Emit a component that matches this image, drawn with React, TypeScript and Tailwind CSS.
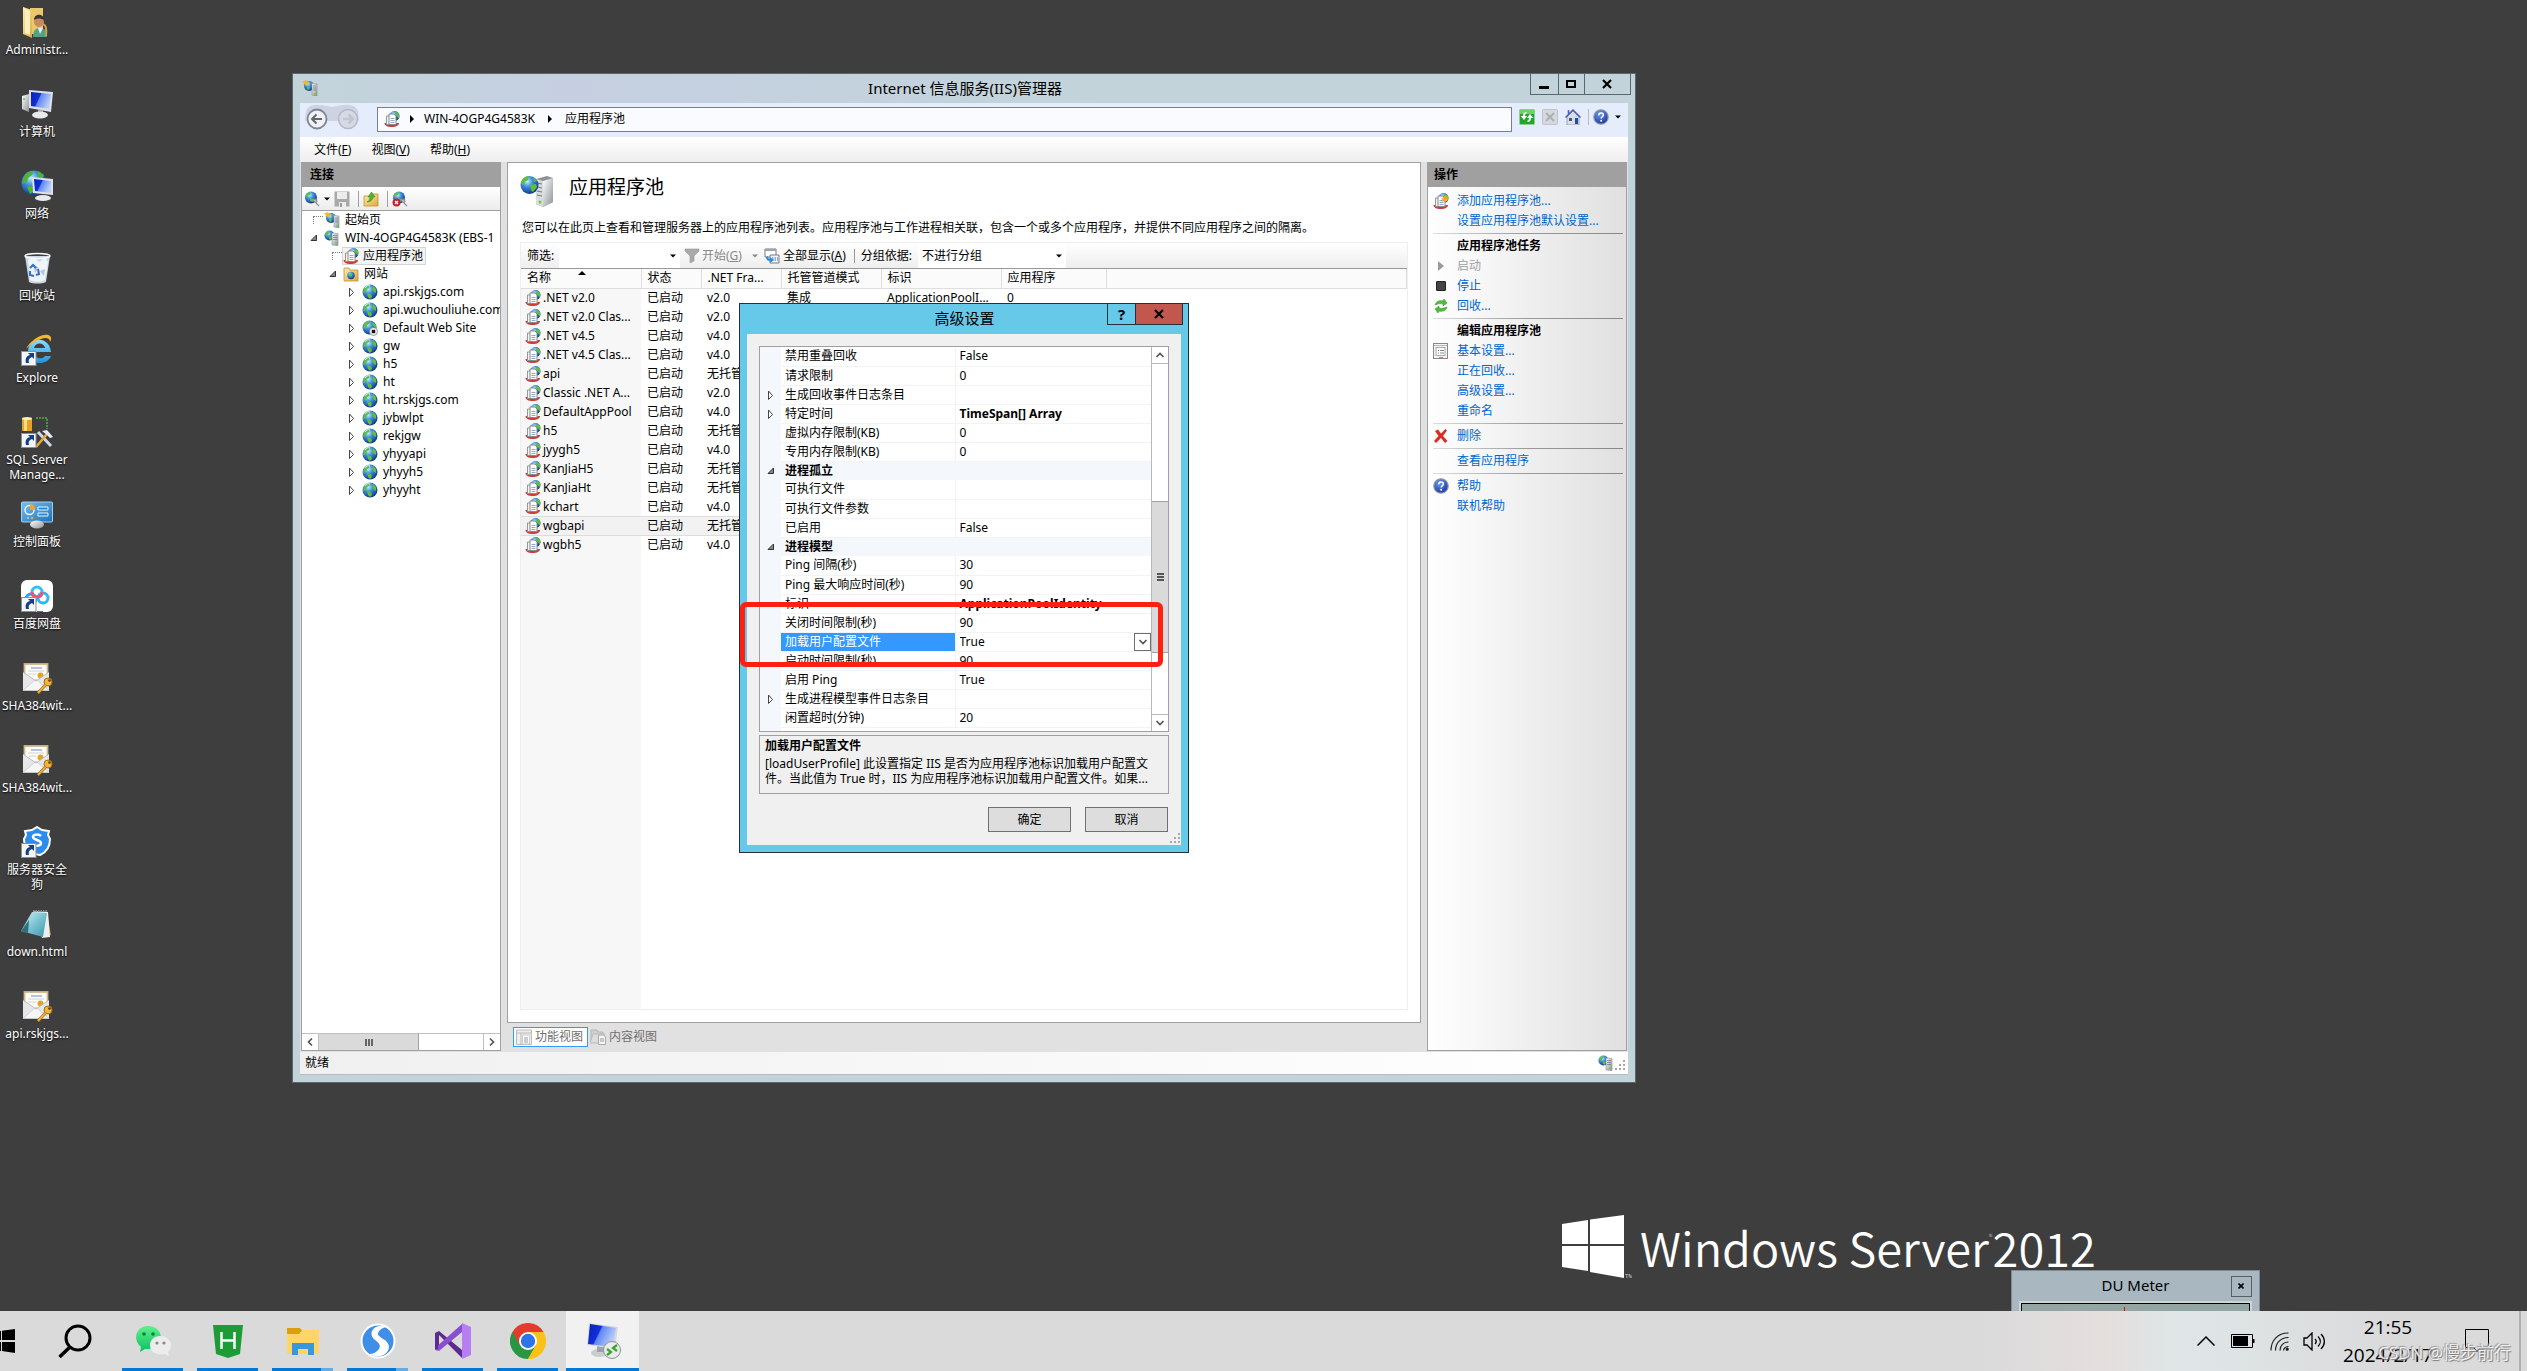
import type { ReactNode } from "react";

type IconProps = { className?: string };

function Defs() {
  return (
    <svg className="absolute h-0 w-0" aria-hidden="true">
      <defs>
        <radialGradient id="globe" cx="0.38" cy="0.3" r="0.75">
          <stop offset="0" stopColor="#c4ecff" />
          <stop offset="0.4" stopColor="#3f8fe0" />
          <stop offset="1" stopColor="#0b2f86" />
        </radialGradient>
        <linearGradient id="screen" x1="0" y1="0" x2="1" y2="0.4">
          <stop offset="0" stopColor="#0a1fb8" />
          <stop offset="0.45" stopColor="#1230d8" />
          <stop offset="0.5" stopColor="#5f86f4" />
          <stop offset="1" stopColor="#b9cdfb" />
        </linearGradient>
        <linearGradient id="steel" x1="0" y1="0" x2="1" y2="1">
          <stop offset="0" stopColor="#ffffff" />
          <stop offset="1" stopColor="#8d9297" />
        </linearGradient>
        <linearGradient id="gold" x1="0" y1="0" x2="1" y2="1">
          <stop offset="0" stopColor="#ffeeb0" />
          <stop offset="1" stopColor="#dfa93c" />
        </linearGradient>
        <linearGradient id="sky" x1="0" y1="0" x2="0" y2="1">
          <stop offset="0" stopColor="#8fdcfa" />
          <stop offset="1" stopColor="#1d94dc" />
        </linearGradient>
        <linearGradient id="panel" x1="0" y1="0" x2="1" y2="1">
          <stop offset="0" stopColor="#77c0ee" />
          <stop offset="1" stopColor="#1e71ba" />
        </linearGradient>
        <radialGradient id="helpBlue" cx="0.4" cy="0.3" r="0.8">
          <stop offset="0" stopColor="#6e9cf0" />
          <stop offset="1" stopColor="#0f2a8c" />
        </radialGradient>
        <linearGradient id="note" x1="0" y1="0" x2="1" y2="1">
          <stop offset="0" stopColor="#d8f4f7" />
          <stop offset="0.5" stopColor="#7cc4d2" />
          <stop offset="1" stopColor="#3f94a8" />
        </linearGradient>
        <linearGradient id="chat" x1="0" y1="0" x2="0" y2="1">
          <stop offset="0" stopColor="#5df08a" />
          <stop offset="1" stopColor="#0cc160" />
        </linearGradient>
      </defs>
    </svg>
  );
}

function Shortcut() {
  return (
    <g>
      <rect x="0.5" y="17.5" width="14.5" height="14" fill="#f4f6f8" stroke="#8a8f94" />
      <path d="M5 29c-1-4 0-7 4-8l-2-2h6v6l-2-2c-3 1-4 3-3 6z" fill="#123f8c" />
    </g>
  );
}

function UserFolderIcon() {
  return (
    <svg viewBox="0 0 32 32" className="h-8 w-8">
      <path d="M9 2h13v26H9z" fill="#e9c96c" />
      <path d="M2 1l9 3v28l-9-4z" fill="url(#gold)" />
      <path d="M4 3l5 2v24l-5-2z" fill="#fff1be" />
      <path d="M12 31c0-7 3-9 7-9s7 2 7 9z" fill="#55a088" />
      <path d="M17 22l2 6 3-6z" fill="#e7ede6" />
      <circle cx="18" cy="16" r="5" fill="#c58b62" />
      <path d="M13 14c0-7 10-7 10 0-3-2-7-2-10 0z" fill="#3f332d" />
      <path d="M22 18c3 1 4 5 3 12" stroke="#d2a046" strokeWidth="2" fill="none" />
    </svg>
  );
}

function ComputerIcon() {
  return (
    <svg viewBox="0 0 32 32" className="h-8 w-8">
      <path d="M1 8l7-2v18l-7-3z" fill="url(#steel)" />
      <circle cx="3" cy="11" r="1" fill="#58d33a" />
      <path d="M8 2l24 2-2 20-22-4z" fill="#dfe2e4" />
      <path d="M10 4l20 2-2 15-18-3z" fill="url(#screen)" />
      <path d="M17 21l5 1v4h-5z" fill="#a9adb0" />
      <ellipse cx="19" cy="27" rx="8" ry="3.5" fill="#e8eaeb" />
    </svg>
  );
}

function NetworkIcon() {
  return (
    <svg viewBox="0 0 32 32" className="h-8 w-8">
      <circle cx="13" cy="13" r="12.5" fill="url(#globe)" />
      <path d="M3 7c3-5 7-6 10-6l-2 4-4 3-1 4-5 2zM6 17l5-2 1 7-3 2zM17 1l6 4-2 4-4-3z" fill="#4fb52f" />
      <path d="M11 7l21 2v16l-20-2z" fill="#dfe2e4" />
      <path d="M13 9l17 2v12l-16-2z" fill="url(#screen)" />
      <ellipse cx="22" cy="28" rx="8" ry="3" fill="#e8eaeb" />
    </svg>
  );
}

function RecycleBinIcon() {
  return (
    <svg viewBox="0 0 32 32" className="h-8 w-8">
      <path d="M4 4h25l-4 26c-4 2-13 2-17 0z" fill="#c9d8e4" />
      <path d="M7 8l6-3 5 5 6-4 3 4-3 18c-4 2-11 2-15 0z" fill="#eef4f8" />
      <path d="M12 12l6 4-4 5zM19 19l5-2-1 7z" fill="#b5c6d4" />
      <ellipse cx="16.500" cy="4" rx="12.500" ry="2.500" fill="none" stroke="#f7fafc" strokeWidth="1.500" />
      <path d="M9 16l3-3 3 3M17 17l1 5-3 1M13 24l-4-1v-4" stroke="#2f6fd0" strokeWidth="2" fill="none" />
    </svg>
  );
}

function ExplorerIcon() {
  return (
    <svg viewBox="0 0 32 32" className="h-8 w-8">
      <path
        d="M30 18H13c0 7 9 8 11 4h6c-4 11-24 9-23-5S28 1 30 18zM13 14h11c-1-6-10-6-11 0z"
        fill="url(#sky)"
      />
      <path d="M5 15C10 5 24-2 29 2c2 2 1 4 0 6 0-4-4-5-9-3-7 2-12 7-15 10z" fill="#f7b52c" />
      <Shortcut />
    </svg>
  );
}

function SqlIcon() {
  return (
    <svg viewBox="0 0 32 32" className="h-8 w-8">
      <rect x="1" y="2" width="10" height="13" fill="#e8a31c" />
      <rect x="3" y="2" width="3" height="13" fill="#ffdf85" />
      <ellipse cx="6" cy="2.500" rx="5" ry="1.500" fill="#fff0b5" />
      <path d="M15 2h11v11" stroke="#49b53a" strokeWidth="1.500" strokeDasharray="2 1" fill="none" />
      <path d="M30 30L17 16" stroke="#cfd9e6" strokeWidth="3" />
      <path d="M15 31l11-13" stroke="#e5a93c" strokeWidth="2.500" />
      <path d="M21 15l5-1 6 7-3 1-3-3z" fill="#e9eef4" />
      <Shortcut />
    </svg>
  );
}

function ControlPanelIcon() {
  return (
    <svg viewBox="0 0 32 32" className="h-8 w-8">
      <rect x="0.500" y="4" width="31" height="20" rx="1" fill="url(#panel)" stroke="#9fd0f0" />
      <circle cx="8.500" cy="12" r="4.500" fill="none" stroke="#e8f5ff" strokeWidth="1.500" />
      <path d="M9 6v6h5c0-4-2-6-5-6z" fill="#f6a428" />
      <path d="M17 9h10v3H17zM17 15h10v3H17z" fill="#2b86cc" stroke="#e8f5ff" />
      <circle cx="7" cy="20" r="1" fill="#7fe1ff" />
      <circle cx="11" cy="20" r="1.300" fill="#f6a428" />
      <ellipse cx="16" cy="26.500" rx="7" ry="4" fill="url(#steel)" />
    </svg>
  );
}

function NetdiskIcon() {
  return (
    <svg viewBox="0 0 32 32" className="h-8 w-8">
      <rect width="32" height="32" rx="6" fill="#fff" />
      <circle cx="10" cy="19" r="5" fill="none" stroke="#2a9ff4" strokeWidth="3" />
      <circle cx="22" cy="18" r="5" fill="none" stroke="#27b9f2" strokeWidth="3" />
      <circle cx="16" cy="12" r="5" fill="none" stroke="#35c0f5" strokeWidth="3" />
      <path d="M11 12c0 4 2 5 5 5s5-1 5-5" fill="none" stroke="#f5517c" strokeWidth="3" />
      <path d="M16 32h6v-1h-6z" fill="#1d7fe8" />
      <Shortcut />
    </svg>
  );
}

function CertificateIcon() {
  return (
    <svg viewBox="0 0 32 32" className="h-8 w-8">
      <rect x="3.500" y="2" width="23" height="20" fill="#fffdf6" stroke="#cdb88f" strokeWidth="1.800" />
      <path d="M10 6h11" stroke="#7f9fd4" strokeWidth="1.200" />
      <path d="M7 9h16M8 12h7" stroke="#cdd1d6" />
      <circle cx="19.500" cy="13.500" r="3" fill="#e0a526" />
      <path d="M2 10l13 9 13-9v18.500H2z" fill="#e6e7e8" />
      <path d="M2 28.500L15 17l13 11.500z" fill="#f6f6f7" stroke="#c6c9cc" strokeWidth="0.800" />
      <path d="M2 10l13 9 13-9" stroke="#a9acb0" strokeWidth="0.800" fill="none" />
      <circle cx="27" cy="20" r="4" fill="#f0b33c" stroke="#a36f12" />
      <circle cx="28.500" cy="18.500" r="1.300" fill="#5d3f0a" />
      <path d="M24.500 23L17 31" stroke="#a36f12" strokeWidth="3" />
      <path d="M24.500 23L17 31" stroke="#f0b33c" strokeWidth="1.800" />
    </svg>
  );
}

function GuardIcon() {
  return (
    <svg viewBox="0 0 32 32" className="h-8 w-8">
      <path
        d="M16 1l5 3 7 1-1 4 2 4c0 7-3 13-10 16C9 28 3 21 3 13l2-4-1-4 7-1z"
        fill="#2b8cee"
        stroke="#fff"
        strokeWidth="2"
      />
      <path d="M20 10c-2-2-8-2-8 1s8 3 8 6-6 4-9 1" stroke="#fff" strokeWidth="2.500" fill="none" />
      <Shortcut />
    </svg>
  );
}

function NotepadIcon() {
  return (
    <svg viewBox="0 0 32 32" className="h-8 w-8">
      <path d="M26 5l4 22-6 2z" fill="#b98f3a" />
      <path d="M12 3l15 1 2 25-8 1z" fill="#e9f1f2" />
      <path d="M11 4l15 1-4 24L0 23z" fill="url(#note)" />
      <path d="M0 23l8-11-1 13z" fill="#2d6f80" />
      <path d="M12 3h15" stroke="#888" strokeWidth="2" strokeDasharray="1.500 1" />
    </svg>
  );
}

function GlobeIcon({ className = "h-4 w-4" }: IconProps) {
  return (
    <svg viewBox="0 0 16 16" className={className}>
      <circle cx="8" cy="8" r="7.500" fill="url(#globe)" />
      <path d="M2 5c1-3 4-4 6-4L7 4 5 5 4 8 1 9zM5 9l4 1 1 3-2 2-2-2zM11 2l3 3v4l-2-1-2-3z" fill="#5fbf3d" />
      <path d="M3 4c1-2 3-3 5-2" stroke="#e4f6ff" strokeWidth="1" fill="none" />
    </svg>
  );
}

function StoppedGlobeIcon() {
  return (
    <svg viewBox="0 0 16 16" className="h-4 w-4">
      <circle cx="7.500" cy="7.500" r="7" fill="url(#globe)" />
      <path d="M2 5c1-3 4-4 6-4L7 4 5 5 4 8 1 9zM11 2l3 3v3l-4-3z" fill="#5fbf3d" />
      <circle cx="11.500" cy="11.500" r="4" fill="#f2f2f2" stroke="#777" strokeWidth="0.700" />
      <rect x="9.800" y="9.800" width="3.400" height="3.400" fill="#111" />
    </svg>
  );
}

function ServerIcon({ className = "h-4 w-4" }: IconProps) {
  return (
    <svg viewBox="0 0 16 16" className={className}>
      <circle cx="5.500" cy="5.500" r="5" fill="url(#globe)" />
      <path d="M1 4c1-2 3-3 5-3L5 3 3 6zM5 6l3 1-1 3-2-1z" fill="#5fbf3d" />
      <path d="M8 3l6 0.500v12L8 15z" fill="url(#steel)" stroke="#868b90" strokeWidth="0.600" />
      <path d="M9 5.500h4M9 7.500h4M9 9.500h4" stroke="#73787d" strokeWidth="0.800" />
      <rect x="11" y="12.500" width="2" height="1.500" fill="#62d820" />
    </svg>
  );
}

function StartPageIcon() {
  return (
    <svg viewBox="0 0 16 16" className="h-4 w-4">
      <circle cx="7" cy="6" r="5" fill="url(#globe)" />
      <path d="M5 6l3 1-1 3-2-1zM8 2l3 1v3z" fill="#5fbf3d" />
      <path d="M4 0l1 2 2-1-1 2 1 2-2-1-1 2-1-2-2 1 1-2-2-2h2z" fill="#f9b51f" />
      <path d="M10 3.500l5 0.500v12l-5-1z" fill="url(#steel)" stroke="#868b90" strokeWidth="0.600" />
      <path d="M11 6h3M11 8h3M11 10h3" stroke="#73787d" strokeWidth="0.800" />
      <rect x="12" y="13" width="2" height="1.500" fill="#62d820" />
    </svg>
  );
}

function BigServerIcon() {
  return (
    <svg viewBox="0 0 34 34" className="h-[34px] w-[34px] shrink-0">
      <path d="M16 5l11-3 6 2v24l-10 5-7-3z" fill="#8e9296" />
      <path d="M16 5l7 2v26l-7-3z" fill="#d9dcde" />
      <path d="M23 7l10-3v24l-10 5z" fill="url(#steel)" />
      <path d="M17 9l5 1M17 13l5 1M17 17l5 1M17 21l5 1" stroke="#777c80" strokeWidth="1.200" />
      <circle cx="20" cy="28" r="1.500" fill="#62d820" />
      <circle cx="9.500" cy="11" r="9" fill="url(#globe)" />
      <path d="M1 10c0-5 4-8 8-8l-1 4-4 2 1 3zM10 11l6-1 1 3-4 5-2-2zM13 3l4 4-3 1z" fill="#5fbf3d" />
    </svg>
  );
}

function PoolIcon({ star = false }: { star?: boolean }) {
  return (
    <svg viewBox="0 0 16 16" className="h-4 w-4 shrink-0">
      <circle cx="10.500" cy="5" r="5" fill="url(#globe)" />
      <path d="M11 0.500l4 2v5l-3-3z" fill="#5fbf3d" />
      <path d="M0.500 12h3l1 2h7l1-2h2.500c0 2.500-3 4-7.300 4S0.500 14.500 0.500 12z" fill="#c9403a" />
      <path d="M2.500 5h5v8.500h-5z" fill="#f2f2f2" stroke="#8c8c8c" strokeWidth="0.900" />
      <path d="M5 3h5l2 2v8.500H5z" fill="#fff" stroke="#7e7e7e" strokeWidth="0.900" />
      <path d="M6.500 7.500h4M6.500 9.500h4M6.500 11.500h4" stroke="#7695b5" strokeWidth="0.800" />
      {star && <path d="M12 2l1 2 2-1-1 2 2 1-2 1 1 2-2-1-1 2-1-2-2 1 1-2-2-1 2-1-1-2 2 1z" fill="#f9a91f" />}
    </svg>
  );
}

function SitesFolderIcon() {
  return (
    <svg viewBox="0 0 16 16" className="h-4 w-4">
      <path d="M1 2h5l1 2h8v11H1z" fill="url(#gold)" stroke="#bf9136" strokeWidth="0.800" />
      <circle cx="8" cy="9.500" r="3.700" fill="url(#globe)" />
      <path d="M6 8l3-1 0 3-2 1z" fill="#5fbf3d" />
    </svg>
  );
}

function ConnectIcon({ broken = false }: { broken?: boolean }) {
  return (
    <svg viewBox="0 0 16 16" className="h-4 w-4">
      <circle cx="7" cy="6.500" r="6" fill="url(#globe)" />
      <path d="M1 6c1-3 3-5 6-5L6 4 3 5zM6 7l4 1-1 3-3-1z" fill="#5fbf3d" />
      <path d="M9 9l2-1 2 2-1 2zM12 12l3 3" fill="#cfd4d8" stroke="#8a9096" strokeWidth="1.200" />
      {broken && (
        <g>
          <circle cx="4.500" cy="11.500" r="4" fill="#c9202b" />
          <path d="M3 10l3 3M6 10l-3 3" stroke="#fff" strokeWidth="1.200" />
        </g>
      )}
    </svg>
  );
}

function HelpIcon() {
  return (
    <svg viewBox="0 0 16 16" className="h-4 w-4">
      <circle cx="8" cy="8" r="7.200" fill="url(#helpBlue)" stroke="#8f96a6" strokeWidth="1.200" />
      <path d="M5.800 6.200c0-3 4.600-3 4.600-0.200 0 1.600-2.200 1.600-2.200 3.400" stroke="#fff" strokeWidth="1.500" fill="none" />
      <circle cx="8.200" cy="11.700" r="1" fill="#fff" />
    </svg>
  );
}

function Caret({ className = "fill-black" }: IconProps) {
  return (
    <svg viewBox="0 0 6 4" className={`h-1 w-1.5 shrink-0 ${className}`}>
      <path d="M0 0.500h6l-3 3z" />
    </svg>
  );
}

function Chevron({ turn = "" }: { turn?: string }) {
  return (
    <svg viewBox="0 0 10 10" className={`h-2.5 w-2.5 ${turn}`}>
      <path d="M1.500 3l3.500 3.500L8.500 3" stroke="#555" strokeWidth="1.700" fill="none" />
    </svg>
  );
}

function Expander({ open }: { open: boolean }) {
  return (
    <svg viewBox="0 0 10 10" className="h-2.5 w-2.5 shrink-0">
      {open ? <path d="M7.500 2v5.500H2z" fill="#888" stroke="#333" /> : <path d="M2.500 1l4 4.500-4 4z" fill="#fff" stroke="#444" />}
    </svg>
  );
}

function Grip() {
  return (
    <svg viewBox="0 0 12 12" className="h-3 w-3" fill="#a8a8a8">
      <path d="M9 1h2v2H9zM5 5h2v2H5zM9 5h2v2H9zM1 9h2v2H1zM5 9h2v2H5zM9 9h2v2H9z" />
    </svg>
  );
}

const shortcuts: { icon: ReactNode; label: string }[] = [
  { icon: <UserFolderIcon />, label: "Administr..." },
  { icon: <ComputerIcon />, label: "计算机" },
  { icon: <NetworkIcon />, label: "网络" },
  { icon: <RecycleBinIcon />, label: "回收站" },
  { icon: <ExplorerIcon />, label: "Explore" },
  { icon: <SqlIcon />, label: "SQL Server Manage..." },
  { icon: <ControlPanelIcon />, label: "控制面板" },
  { icon: <NetdiskIcon />, label: "百度网盘" },
  { icon: <CertificateIcon />, label: "SHA384wit..." },
  { icon: <CertificateIcon />, label: "SHA384wit..." },
  { icon: <GuardIcon />, label: "服务器安全狗" },
  { icon: <NotepadIcon />, label: "down.html" },
  { icon: <CertificateIcon />, label: "api.rskjgs..." },
];

function DesktopIcons() {
  return (
    <ul className="flex w-[74px] flex-col pt-1.5">
      {shortcuts.map((s, i) => (
        <li key={i} className="h-[82px]">
          <button className="flex w-full flex-col items-center gap-1 text-center leading-[15px] text-white [text-shadow:0_1px_2px_#000]">
            {s.icon}
            <span className="w-[70px]">{s.label}</span>
          </button>
        </li>
      ))}
    </ul>
  );
}

type TreeNode = {
  level: 0 | 1 | 2;
  label: string;
  icon: ReactNode;
  open?: boolean;
  leaf?: boolean;
  selected?: boolean;
};

const sites = [
  "api.rskjgs.com",
  "api.wuchouliuhe.com",
  "Default Web Site",
  "gw",
  "h5",
  "ht",
  "ht.rskjgs.com",
  "jybwlpt",
  "rekjgw",
  "yhyyapi",
  "yhyyh5",
  "yhyyht",
];

const tree: TreeNode[] = [
  { level: 0, label: "起始页", icon: <StartPageIcon />, leaf: true },
  { level: 0, label: "WIN-4OGP4G4583K (EBS-1", icon: <ServerIcon />, open: true },
  { level: 1, label: "应用程序池", icon: <PoolIcon />, leaf: true, selected: true },
  { level: 1, label: "网站", icon: <SitesFolderIcon />, open: true },
  ...sites.map((label): TreeNode => ({
    level: 2,
    label,
    icon: label === "Default Web Site" ? <StoppedGlobeIcon /> : <GlobeIcon />,
  })),
];

const indent = ["pl-[7px]", "pl-[26px]", "pl-[45px]"];

function Connections() {
  return (
    <section className="flex w-[200px] shrink-0 flex-col border border-[#a0a0a0] bg-white">
      <h2 className="h-6 bg-[#a0a0a0] pl-2 leading-6 font-bold">连接</h2>
      <div className="flex h-6 items-center border-b border-[#a0a0a0] bg-linear-to-b from-white to-[#ececec] pl-0.5">
        <button aria-label="连接" className="flex items-center gap-1">
          <ConnectIcon />
          <Caret />
        </button>
        <button aria-label="保存" className="ml-1">
          <svg viewBox="0 0 16 16" className="h-4 w-4">
            <path d="M0.500 0.500h15v15h-15z" fill="#a9a9a9" />
            <path d="M3 1h10v7H3zM5 11h7v5H5z" fill="#ececec" />
            <path d="M6 12h2v4H6z" fill="#999" />
          </svg>
        </button>
        <span className="mr-1 ml-2 h-4 w-px bg-[#a0a0a0]" />
        <button aria-label="上移">
          <svg viewBox="0 0 16 16" className="h-4 w-4">
            <path d="M1 5h6l1-2h7v12H1z" fill="url(#gold)" stroke="#bf9136" strokeWidth="0.800" />
            <path d="M4 11c2-1 3-2 3-5H5l3.500-5L12 6h-2c0 3-3 5-6 5z" fill="#4fb52f" stroke="#2c7a18" strokeWidth="0.500" />
          </svg>
        </button>
        <span className="mr-1 ml-2 h-4 w-px bg-[#a0a0a0]" />
        <button aria-label="断开连接">
          <ConnectIcon broken />
        </button>
      </div>
      <ul className="flex-1 overflow-hidden">
        {tree.map((n) => (
          <li key={n.label} className={`flex h-[18px] items-center whitespace-nowrap ${indent[n.level]}`}>
            <span className="flex w-3.5 shrink-0 items-center">
              {n.leaf ? <span className="ml-1 h-2 w-2.5 border-t border-l border-dotted border-[#777]" /> : <Expander open={!!n.open} />}
            </span>
            <span
              className={
                n.selected
                  ? "flex h-[18px] items-center gap-1 border border-[#d5d5d5] bg-[#f3f3f3] pr-0.5"
                  : "flex items-center gap-[5px] pl-px"
              }
            >
              <span className="h-4 w-4 shrink-0">{n.icon}</span>
              <span className="leading-[18px]">{n.label}</span>
            </span>
          </li>
        ))}
      </ul>
      <div className="flex h-[17px] border-t border-[#c0c0c0]">
        <button aria-label="向左" className="flex w-[17px] items-center justify-center border-r border-[#c0c0c0]">
          <Chevron turn="rotate-90" />
        </button>
        <div className="flex w-[100px] items-center justify-center gap-px border-r border-[#a0a0a0] bg-[#dadada]">
          <span className="h-[7px] w-0.5 bg-[#666]" />
          <span className="h-[7px] w-0.5 bg-[#666]" />
          <span className="h-[7px] w-0.5 bg-[#666]" />
        </div>
        <div className="flex-1" />
        <button aria-label="向右" className="flex w-[17px] items-center justify-center border-l border-[#c0c0c0]">
          <Chevron turn="-rotate-90" />
        </button>
      </div>
    </section>
  );
}

const pools = [
  [".NET v2.0", "v2.0"],
  [".NET v2.0 Clas...", "v2.0"],
  [".NET v4.5", "v4.0"],
  [".NET v4.5 Clas...", "v4.0"],
  ["api", "无托管代码"],
  ["Classic .NET A...", "v2.0"],
  ["DefaultAppPool", "v4.0"],
  ["h5", "无托管代码"],
  ["jyygh5", "v4.0"],
  ["KanJiaH5", "无托管代码"],
  ["KanJiaHt", "无托管代码"],
  ["kchart", "v4.0"],
  ["wgbapi", "无托管代码"],
  ["wgbh5", "v4.0"],
];

function PoolTable() {
  return (
    <div className="flex flex-1 flex-col border-b border-[#eee]">
      <table className="w-full table-fixed border-collapse text-left">
        <colgroup>
          <col className="w-[120px]" />
          <col className="w-[60px]" />
          <col className="w-[80px]" />
          <col className="w-[100px]" />
          <col className="w-[120px]" />
          <col className="w-[105px]" />
          <col />
        </colgroup>
        <thead>
          <tr className="h-[19px] border-b border-[#dedede] bg-[#fbfbfb] [&>th]:border-r [&>th]:border-[#dedede] [&>th]:py-0 [&>th]:pl-1.5 [&>th]:leading-[18px] [&>th]:font-normal">
            <th>
              <span className="flex items-start">
                名称
                <svg viewBox="0 0 8 4" className="mt-0.5 ml-[27px] h-1 w-2">
                  <path d="M0 4l4-4 4 4z" />
                </svg>
              </span>
            </th>
            <th>状态</th>
            <th>.NET Fra...</th>
            <th>托管管道模式</th>
            <th>标识</th>
            <th>应用程序</th>
            <th aria-label="空白" />
          </tr>
        </thead>
        <tbody>
          {pools.map(([name, version], i) => (
            <tr
              key={name}
              className={`h-[19px] [&>td]:py-0 [&>td]:pl-1.5 [&>td]:leading-[17px] [&>td]:whitespace-nowrap ${
                name === "wgbapi"
                  ? "[&>td:not(:last-child)]:border-y [&>td:not(:last-child)]:border-[#dcdcdc] [&>td:not(:last-child)]:bg-[#f2f2f2]"
                  : ""
              }`}
            >
              <td className="bg-[#f7f7f7]">
                <span className="-ml-0.5 flex items-center gap-0.5">
                  <PoolIcon />
                  {name}
                </span>
              </td>
              <td>已启动</td>
              <td className="truncate">{version}</td>
              <td>{i === 0 && "集成"}</td>
              <td>{i === 0 && "ApplicationPoolI..."}</td>
              <td>{i === 0 && "0"}</td>
              <td />
            </tr>
          ))}
        </tbody>
      </table>
      <div className="w-[120px] flex-1 bg-[#f7f7f7]" />
    </div>
  );
}

function Center() {
  return (
    <div className="flex min-w-0 flex-1 flex-col">
      <section className="flex flex-1 flex-col border border-[#a0a0a0] bg-white px-3 pt-[11px] pb-3">
        <div className="flex items-start gap-[15px]">
          <BigServerIcon />
          <h1 className="text-[19px] leading-[26px]">应用程序池</h1>
        </div>
        <p className="mt-[11px] px-0.5 leading-[18px]">
          您可以在此页上查看和管理服务器上的应用程序池列表。应用程序池与工作进程相关联，包含一个或多个应用程序，并提供不同应用程序之间的隔离。
        </p>
        <div className="mt-[5px] flex flex-1 flex-col border-x border-t border-[#eee]">
          <div className="flex h-[26px] items-center border-b border-[#999] bg-linear-to-b from-white to-[#eee]">
            <label htmlFor="filter" className="w-[38px] pl-1.5 whitespace-nowrap">
              筛选:
            </label>
            <div className="flex h-full w-[121px] items-center bg-white pr-1">
              <input id="filter" className="h-5 min-w-0 flex-1 bg-transparent outline-none" />
              <Caret />
            </div>
            <button className="ml-1 flex items-center gap-0.5 whitespace-nowrap text-[#888]">
              <svg viewBox="0 0 16 16" className="h-4 w-4">
                <path d="M1 1h14v2l-5 5v5l-4 2V8L1 3z" fill="#aaa" stroke="#999" strokeWidth="0.600" />
              </svg>
              <span>
                开始(<u>G</u>)
              </span>
              <Caret className="ml-2 fill-[#888]" />
            </button>
            <button className="ml-1.5 flex items-center gap-[3px] whitespace-nowrap">
              <svg viewBox="0 0 16 16" className="h-4 w-4">
                <path d="M1 1h11v8H1z" fill="#fff" stroke="#777f88" />
                <path d="M1 1h11v2H1z" fill="#9aa4ae" />
                <path d="M6 7h9v8H6z" fill="#eef3fb" stroke="#777f88" />
                <path d="M8 10h6M8 12h6" stroke="#3d6fc4" strokeDasharray="1.500 1" />
                <path d="M2 9c0 3 2 4 4 4v2l4-3-4-3v2c-1 0-2-1-2-3z" fill="#2f8fd6" />
              </svg>
              <span>
                全部显示(<u>A</u>)
              </span>
            </button>
            <span className="mr-1.5 ml-2 h-3.5 w-px bg-[#999]" />
            <label htmlFor="group" className="whitespace-nowrap">
              分组依据:
            </label>
            <div className="ml-1.5 flex h-full w-[148px] items-center bg-white pr-1">
              <select id="group" className="h-5 flex-1 appearance-none bg-transparent pl-1 outline-none">
                <option>不进行分组</option>
              </select>
              <Caret />
            </div>
          </div>
          <PoolTable />
        </div>
      </section>
      <div className="flex h-7 items-center pl-1.5 text-[#707070]">
        <button className="flex h-5 items-center gap-[3px] border border-[#3399ff] bg-white px-0.5 pr-1">
          <svg viewBox="0 0 16 16" className="h-4 w-4">
            <path d="M0.500 1h15v14.500h-15z" fill="#eee" stroke="#bbb" />
            <path d="M1 4h14M5 4v11" stroke="#bbb" />
            <path d="M6.500 6h7v9h-7z" fill="#fff" stroke="#ccc" />
            <path d="M8 9h4M8 11h4M8 13h4" stroke="#999" />
          </svg>
          功能视图
        </button>
        <button className="ml-0.5 flex h-5 items-center gap-[3px]">
          <svg viewBox="0 0 16 16" className="h-4 w-4">
            <path d="M1 1h6l1 2h5v9H1z" fill="#cfcfcf" stroke="#b5b5b5" />
            <path d="M3 5h12l-3 9H0z" fill="#dcdcdc" stroke="#bbb" />
            <path d="M8.500 6h5l2 2v7.500h-7z" fill="#f4f4f4" stroke="#aaa" />
            <path d="M10 10h4M10 12h4" stroke="#999" />
          </svg>
          内容视图
        </button>
      </div>
    </div>
  );
}

function ActionLink({ icon, children }: { icon?: ReactNode; children: ReactNode }) {
  return (
    <li className="flex h-5 items-center">
      <span className="flex w-6 justify-start">{icon}</span>
      <a href="#" className="text-[#0066cc]">
        {children}
      </a>
    </li>
  );
}

function ActionRule() {
  return (
    <li className="flex h-[5px] items-center">
      <span className="h-px w-full bg-linear-to-r from-[#ddd] via-[#999] to-[#888]" />
    </li>
  );
}

function Actions() {
  return (
    <section className="flex w-[200px] shrink-0 flex-col border border-[#a0a0a0] bg-linear-to-r from-white to-[#e0e0e0]">
      <h2 className="h-6 bg-[#a0a0a0] pl-1.5 leading-6 font-bold">操作</h2>
      <ul className="pt-1 pr-[3px] pl-[5px]">
        <ActionLink icon={<PoolIcon star />}>添加应用程序池...</ActionLink>
        <ActionLink>设置应用程序池默认设置...</ActionLink>
        <ActionRule />
        <li className="h-5 pl-6 leading-5 font-bold">应用程序池任务</li>
        <li className="flex h-5 items-center text-[#a0a0a0]">
          <svg viewBox="0 0 16 16" className="mr-2 h-4 w-4">
            <path d="M5 3l6 5-6 5z" fill="#999" />
          </svg>
          启动
        </li>
        <ActionLink
          icon={
            <svg viewBox="0 0 16 16" className="h-4 w-4">
              <rect x="3.500" y="3.500" width="9" height="9" rx="0.500" fill="#444" stroke="#222" />
            </svg>
          }
        >
          停止
        </ActionLink>
        <ActionLink
          icon={
            <svg viewBox="0 0 16 16" className="h-4 w-4">
              <path d="M2 7c1-4 5-5 8-4l1-2 3 4-4 3v-2C7 5 5 6 2 7z" fill="#4fbf3a" stroke="#2d8a1d" strokeWidth="0.500" />
              <path d="M14 9c-1 4-5 5-8 4l-1 2-3-4 4-3v2c3 1 5 0 8-1z" fill="#4fbf3a" stroke="#2d8a1d" strokeWidth="0.500" />
            </svg>
          }
        >
          回收...
        </ActionLink>
        <ActionRule />
        <li className="h-5 pl-6 leading-5 font-bold">编辑应用程序池</li>
        <ActionLink
          icon={
            <svg viewBox="0 0 16 16" className="h-4 w-4">
              <rect x="0.500" y="0.500" width="14" height="15" fill="#f4f4f4" stroke="#888" />
              <path d="M1 2.500h13" stroke="#bbb" />
              <rect x="3" y="4.500" width="9" height="8" fill="#fff" stroke="#aaa" />
              <path d="M5 7.500h1M5 10h1M7 7.500h4M7 10h4" stroke="#888" />
              <path d="M6 14.500h4" stroke="#35b6e8" />
            </svg>
          }
        >
          基本设置...
        </ActionLink>
        <ActionLink>正在回收...</ActionLink>
        <ActionLink>高级设置...</ActionLink>
        <ActionLink>重命名</ActionLink>
        <ActionRule />
        <ActionLink
          icon={
            <svg viewBox="0 0 16 16" className="h-4 w-4">
              <path d="M2 3l3-1.500 3 4L12.500 1 14 2.500 10 8l4.500 5-2.500 2-4-5-5 5L1 13l4.500-5z" fill="#dc2c26" />
            </svg>
          }
        >
          删除
        </ActionLink>
        <ActionRule />
        <ActionLink>查看应用程序</ActionLink>
        <ActionRule />
        <ActionLink icon={<HelpIcon />}>帮助</ActionLink>
        <ActionLink>联机帮助</ActionLink>
      </ul>
    </section>
  );
}

function WindowTitle() {
  return (
    <header className="flex h-[29px] items-start justify-between bg-linear-to-r from-[#c2d4da] via-[#c5cfe1] via-20% to-[#c2d4da] to-60%">
      <span className="w-[100px] pt-1.5 pl-0.5">
        <StartPageIcon />
      </span>
      <span className="pt-px text-[15px] leading-[26px]">Internet 信息服务(IIS)管理器</span>
      <div className="-mt-px mr-[-3px] flex h-[22px] w-[101px] border border-[#5b666d]">
        <button aria-label="最小化" className="flex w-7 items-center justify-center border-r border-[#5b666d]">
          <span className="mt-1.5 h-[3px] w-2.5 bg-black" />
        </button>
        <button aria-label="最大化" className="flex w-[26px] items-center justify-center border-r border-[#5b666d]">
          <span className="h-2 w-2.5 border-2 border-black" />
        </button>
        <button aria-label="关闭" className="flex flex-1 items-center justify-center">
          <svg viewBox="0 0 10 10" className="h-2.5 w-2.5">
            <path d="M1 1l8 8M9 1L1 9" stroke="#000" strokeWidth="2.200" />
          </svg>
        </button>
      </div>
    </header>
  );
}

function AddressBar() {
  return (
    <div className="flex h-[34px] items-start bg-[#e5edfd] pt-1 pr-[7px] pl-1">
      <svg viewBox="0 0 56 30" className="-mt-1 h-[30px] w-14 shrink-0">
        <path d="M2 8C6-1 18 2 28 4 38 2 50-1 54 8l1 10H1z" fill="#cdd3e2" />
        <circle cx="13" cy="16" r="9.500" fill="#eef1f7" stroke="#80858f" strokeWidth="1.800" />
        <path d="M18 16H8.500M12.500 11.500L8 16l4.500 4.500" stroke="#666" strokeWidth="2" fill="none" />
        <circle cx="44" cy="16" r="9.500" fill="#d5daE6" stroke="#b3b9c6" strokeWidth="1.500" />
        <path d="M39 16h9.500M44.500 11.500L49 16l-4.500 4.500" stroke="#c0c5d0" strokeWidth="2.500" fill="none" />
      </svg>
      <div className="ml-[17px] flex h-[25px] flex-1 items-center gap-1.5 border border-[#7c8088] bg-[#fafbff] pb-px pl-1.5">
        <PoolIcon />
        <svg viewBox="0 0 4 8" className="mx-1 h-2 w-1">
          <path d="M0 0l4 4-4 4z" />
        </svg>
        <button>WIN-4OGP4G4583K</button>
        <svg viewBox="0 0 4 8" className="mx-[7px] h-2 w-1">
          <path d="M0 0l4 4-4 4z" />
        </svg>
        <button>应用程序池</button>
      </div>
      <div className="flex items-center pt-0.5 pl-[7px]">
        <button aria-label="刷新">
          <svg viewBox="0 0 16 16" className="h-4 w-4">
            <rect x="0.500" y="0.500" width="15" height="15" rx="1" fill="#23a52c" stroke="#8fcf8f" />
            <path d="M1 1h14v4H1z" fill="#6fcf68" />
            <path d="M7.500 3C5 3 4 4.500 4 7H1.800l3.200 4 3-4H6c0-1.500 0.500-2.500 1.500-2.500z" fill="#fff" />
            <path d="M8.500 13c2.500 0 3.500-1.500 3.500-4h2.200L11 5 8 9h2c0 1.500-0.500 2.500-1.500 2.500z" fill="#fff" />
          </svg>
        </button>
        <button aria-label="停止" className="ml-[7px]">
          <svg viewBox="0 0 16 16" className="h-4 w-4">
            <rect x="0.500" y="0.500" width="15" height="15" rx="1" fill="#d6d8de" stroke="#bfc2c9" />
            <path d="M4 4l8 8M12 4l-8 8" stroke="#aaadb4" strokeWidth="1.800" />
          </svg>
        </button>
        <button aria-label="主页" className="ml-[7px]">
          <svg viewBox="0 0 16 16" className="h-4 w-4">
            <path d="M2 8l6-6 6 6v8H2z" fill="#d9dde8" stroke="#8b93a8" strokeWidth="0.800" />
            <path d="M0.500 8.500L8 1l7.500 7.500M3.500 1v4" stroke="#4a5cc4" strokeWidth="1.500" fill="none" />
            <path d="M4 9h3v3H4z" fill="#4c5562" />
            <path d="M10 9h3v6h-3z" fill="#1d4fa3" />
          </svg>
        </button>
        <span className="mx-1 ml-[7px] h-4 w-px bg-[#bbb]" />
        <button aria-label="帮助" className="flex items-center gap-1.5">
          <HelpIcon />
          <Caret />
        </button>
      </div>
    </div>
  );
}

function IisManager() {
  return (
    <section className="absolute top-[73px] left-[292px] flex h-[1010px] w-[1344px] flex-col border border-[#5b666d] bg-[#c2d4da] px-[7px] pb-[7px]">
      <WindowTitle />
      <div className="flex flex-1 flex-col bg-[#e1e1e1]">
        <AddressBar />
        <nav className="flex h-[25px] items-center gap-5 bg-linear-to-b from-white to-[#eee] pl-3.5">
          <button>
            文件(<u>F</u>)
          </button>
          <button>
            视图(<u>V</u>)
          </button>
          <button>
            帮助(<u>H</u>)
          </button>
        </nav>
        <main className="flex flex-1 gap-1.5 px-px">
          <Connections />
          <Center />
          <Actions />
        </main>
        <footer className="mt-px flex h-[23px] items-center justify-between border-b border-[#b2bec4] bg-linear-to-r from-[#f0f0f0] to-white pr-0.5 pl-[5px]">
          <span>就绪</span>
          <span className="flex items-end">
            <ServerIcon />
            <Grip />
          </span>
        </footer>
      </div>
    </section>
  );
}

type Setting = { name: string; value?: string; group?: boolean; expandable?: boolean; bold?: boolean; selected?: boolean };

const settings: Setting[] = [
  { name: "禁用重叠回收", value: "False" },
  { name: "请求限制", value: "0" },
  { name: "生成回收事件日志条目", expandable: true },
  { name: "特定时间", value: "TimeSpan[] Array", expandable: true, bold: true },
  { name: "虚拟内存限制(KB)", value: "0" },
  { name: "专用内存限制(KB)", value: "0" },
  { name: "进程孤立", group: true },
  { name: "可执行文件" },
  { name: "可执行文件参数" },
  { name: "已启用", value: "False" },
  { name: "进程模型", group: true },
  { name: "Ping 间隔(秒)", value: "30" },
  { name: "Ping 最大响应时间(秒)", value: "90" },
  { name: "标识", value: "ApplicationPoolIdentity", bold: true },
  { name: "关闭时间限制(秒)", value: "90" },
  { name: "加载用户配置文件", value: "True", selected: true },
  { name: "启动时间限制(秒)", value: "90" },
  { name: "启用 Ping", value: "True" },
  { name: "生成进程模型事件日志条目", expandable: true },
  { name: "闲置超时(分钟)", value: "20" },
];

function SettingRow({ s }: { s: Setting }) {
  const gutter = (
    <td className="bg-[#f4f7fc] p-0">
      <span className="flex justify-center">{(s.group || s.expandable) && <Expander open={!!s.group} />}</span>
    </td>
  );
  if (s.group) {
    return (
      <tr className="h-[19px] bg-[#f4f7fc]">
        {gutter}
        <th colSpan={2} className="py-0 pl-1 text-left leading-[18px]">
          {s.name}
        </th>
      </tr>
    );
  }
  return (
    <tr className="h-[19px]">
      {gutter}
      <td
        className={`border-r border-b border-[#f0f4fa] py-0 pl-1 leading-[18px] ${s.selected ? "bg-[#3399ff] text-white" : ""}`}
      >
        {s.selected ? <label htmlFor="load-profile">{s.name}</label> : s.name}
      </td>
      <td className={`border-b border-[#f0f4fa] py-0 pl-1 leading-[18px] ${s.bold ? "font-bold" : ""}`}>
        {s.selected ? (
          <span className="flex h-[18px]">
            <select id="load-profile" className="min-w-0 flex-1 appearance-none bg-white outline-none">
              <option>True</option>
              <option>False</option>
            </select>
            <span className="flex w-[17px] items-center justify-center border border-[#707070]">
              <Chevron />
            </span>
          </span>
        ) : (
          s.value
        )}
      </td>
    </tr>
  );
}

function SettingsDialog() {
  return (
    <section className="absolute top-[303px] left-[739px] flex h-[550px] w-[450px] flex-col border border-[#22323b] bg-[#66c9ea] px-[7px] pb-[7px]">
      <header className="flex h-[30px] items-start justify-between">
        <span className="w-[75px]" />
        <span className="pt-px text-[15px] leading-[26px]">高级设置</span>
        <div className="-mt-px mr-[-2px] flex h-[22px] w-[76px] border border-[#22323b]">
          <button aria-label="帮助" className="w-7 border-r border-[#22323b] text-[15px] leading-5 font-bold">
            ?
          </button>
          <button aria-label="关闭" className="flex flex-1 items-center justify-center bg-[#c2584d]">
            <svg viewBox="0 0 10 10" className="h-2.5 w-2.5">
              <path d="M1 1l8 8M9 1L1 9" stroke="#000" strokeWidth="2.200" />
            </svg>
          </button>
        </div>
      </header>
      <div className="flex flex-1 flex-col bg-[#f0f0f0] px-3 pt-3">
        <div className="flex h-[386px] border border-[#a0a0a0] bg-white">
          <div className="min-w-0 flex-1 bg-linear-to-r from-[#f4f7fc] from-[21px] to-white to-[21px]">
            <table className="w-full table-fixed border-collapse">
              <colgroup>
                <col className="w-[21px]" />
                <col className="w-[174px]" />
                <col />
              </colgroup>
              <tbody>
                {settings.map((s) => (
                  <SettingRow key={s.name} s={s} />
                ))}
              </tbody>
            </table>
          </div>
          <div className="flex w-[17px] flex-col border-l border-[#b8b8b8]">
            <button aria-label="向上" className="flex h-[17px] items-center justify-center border-b border-[#b8b8b8]">
              <Chevron turn="rotate-180" />
            </button>
            <div className="h-[137px]" />
            <div className="flex h-[152px] flex-col items-center justify-center gap-px border-y border-[#a0a0a0] bg-[#dadada]">
              <span className="h-0.5 w-[7px] bg-[#555]" />
              <span className="h-0.5 w-[7px] bg-[#555]" />
              <span className="h-0.5 w-[7px] bg-[#555]" />
            </div>
            <div className="flex-1" />
            <button aria-label="向下" className="flex h-[17px] items-center justify-center border-t border-[#b8b8b8]">
              <Chevron />
            </button>
          </div>
        </div>
        <div className="mt-[3px] h-[59px] border border-[#a0a0a0] pt-0.5 pl-[5px] leading-[15px] whitespace-nowrap">
          <h3 className="mb-[3px] font-bold">加载用户配置文件</h3>
          <p>
            [loadUserProfile] 此设置指定 IIS 是否为应用程序池标识加载用户配置文
            <br />
            件。当此值为 True 时，IIS 为应用程序池标识加载用户配置文件。如果...
          </p>
        </div>
        <div className="mt-[13px] flex justify-end gap-3.5 pr-px">
          <button className="h-[25px] w-[83px] border border-[#707070] bg-[#dddddd]">确定</button>
          <button className="h-[25px] w-[83px] border border-[#707070] bg-[#dddddd]">取消</button>
        </div>
        <div className="mt-auto -mr-3 flex justify-end pb-px">
          <Grip />
        </div>
      </div>
      <div className="pointer-events-none absolute top-[298px] left-0 h-[65px] w-[423px] rounded-md border-[5px] border-[#ff2012]" />
    </section>
  );
}

function Branding() {
  return (
    <div className="absolute top-[1214px] left-[1562px] flex items-center gap-2 text-white">
      <svg viewBox="0 0 70 66" className="h-[66px] w-[70px]">
        <path d="M0 10l26-4v24H0zM28 5.500L62 1v29H28zM0 32h26v25L0 53zM28 32h34v32l-34-6z" fill="#fff" />
        <text x="63" y="64" fontSize="6" fill="#ccc">
          TM
        </text>
      </svg>
      <p className="flex font-['Noto_Sans_CJK_SC'] text-[47px] leading-[58px] font-[350] whitespace-nowrap">
        Windows Server
        <span className="mt-3.5 text-[8px] leading-[10px] text-[#bbb]">®</span>
        <span>2012</span>
      </p>
    </div>
  );
}

function DuMeter() {
  return (
    <section className="absolute bottom-0 left-[2011px] flex h-[41px] w-[249px] flex-col border-x border-t border-[#7d8a92] bg-[#a9b8c0] px-[7px]">
      <header className="flex h-[30px] items-center justify-between">
        <span className="w-[21px]" />
        <span className="pb-0.5 text-[15px]">DU Meter</span>
        <button aria-label="关闭" className="flex h-[21px] w-[21px] items-center justify-center border border-[#555f66]">
          <svg viewBox="0 0 6 6" className="h-1.5 w-1.5">
            <path d="M0.500 0.500l5 5M5.500 0.500l-5 5" stroke="#000" strokeWidth="1.600" />
          </svg>
        </button>
      </header>
      <div className="flex flex-1 border-x-2 border-t-2 border-[#cfd5d5]">
        <div className="flex flex-1 items-end border-x border-t border-black bg-[#93a6a3]">
          <span className="ml-[102px] h-1 w-px bg-[#d11]" />
        </div>
      </div>
    </section>
  );
}

const apps: { name: string; icon: ReactNode; mark: string }[] = [
  {
    name: "微信",
    mark: "single",
    icon: (
      <svg viewBox="0 0 36 36" className="h-9 w-9">
        <path d="M13 3c8 0 13 5 13 12S20 26 13 26l-3 0-5 3 1-5c-9-7-5-21 7-21z" fill="url(#chat)" />
        <circle cx="9" cy="11" r="1.800" fill="#137a3f" />
        <circle cx="18" cy="11" r="1.800" fill="#137a3f" />
        <path d="M25 13c6 0 11 4 11 9 0 3-1 5-3 7l1 4-4-2c-8 2-15-2-15-9 0-5 4-9 10-9z" fill="#ececec" />
        <circle cx="22" cy="20" r="1.600" fill="#888" />
        <circle cx="29" cy="20" r="1.600" fill="#888" />
      </svg>
    ),
  },
  {
    name: "HBuilder",
    mark: "single",
    icon: (
      <svg viewBox="0 0 36 36" className="h-9 w-9">
        <path d="M3 2h30l-3 29-12 4-12-4z" fill="#1d9b35" />
        <path d="M11.500 9v17M24.500 9v17M11 17.500h14" stroke="#fff" strokeWidth="2.500" />
      </svg>
    ),
  },
  {
    name: "文件资源管理器",
    mark: "double",
    icon: (
      <svg viewBox="0 0 36 36" className="h-9 w-9">
        <path d="M2 5h13l3 4h-3v5H2z" fill="#dc9e0f" />
        <path d="M2 11h12l4-4h16v24H2z" fill="#ffd566" />
        <path d="M7 32V20h22v12h-6v-6H13v6z" fill="#3a96dd" />
      </svg>
    ),
  },
  {
    name: "搜狗浏览器",
    mark: "double",
    icon: (
      <svg viewBox="0 0 36 36" className="h-9 w-9">
        <circle cx="18" cy="18" r="17.500" fill="#fff" />
        <circle cx="18" cy="18" r="15.500" fill="#3f8fe8" />
        <path d="M26 4C16 0 8 8 13 15c4 4 9 6 6 11-2 3-6 5-10 5 8 5 19 2 20-7 0-8-12-9-11-14 1-3 4-5 8-6z" fill="#fff" />
      </svg>
    ),
  },
  {
    name: "Visual Studio",
    mark: "single",
    icon: (
      <svg viewBox="0 0 36 36" className="h-9 w-9">
        <path d="M0 10l4-2 23 19v8L4 12v13l-4 2z" fill="#5d2b90" />
        <path d="M0 27l4 1L27 9V1L0 25z" fill="#8a4fd0" />
        <path d="M0 10l3 0v16H0z" fill="#5d2b90" />
        <path d="M27 0l9 4v28l-9 4z" fill="#b77ef3" />
      </svg>
    ),
  },
  {
    name: "Chrome",
    mark: "single",
    icon: (
      <svg viewBox="0 0 36 36" className="h-9 w-9">
        <path d="M18 18L2.400 9A18 18 0 0 1 33.600 9z" fill="#e33b2e" />
        <path d="M18 18L33.600 9A18 18 0 0 1 18 36z" fill="#fbc116" />
        <path d="M18 18v18A18 18 0 0 1 2.400 9z" fill="#2a9543" />
        <path d="M18 9h15.600l-7.800 13.500z" fill="#fbc116" />
        <path d="M10.200 22.500L2.400 9 18 9z" fill="#e33b2e" />
        <path d="M10.200 22.500L18 36l7.800-13.500z" fill="#2a9543" />
        <path d="M25.800 22.500L18 36A18 18 0 0 0 33.600 27z" fill="#fbc116" />
        <circle cx="18" cy="18" r="9" fill="#fff" />
        <circle cx="18" cy="18" r="7.200" fill="#2d74e8" />
      </svg>
    ),
  },
  {
    name: "远程桌面连接",
    mark: "active",
    icon: (
      <svg viewBox="0 0 36 36" className="h-9 w-9">
        <ellipse cx="14" cy="30" rx="8" ry="4" fill="#c9cdd0" />
        <path d="M12 22l7 2v5h-7z" fill="#9da2a6" />
        <path d="M4 0l29 4-3 22L2 22z" fill="#d5d9dc" />
        <path d="M5 1l26 4-3 19L3 21z" fill="url(#screen)" />
        <circle cx="27" cy="27" r="8.500" fill="#e9ebec" stroke="#8d9194" />
        <path d="M22 26l4 3-4 3M32 22l-4 3 4 3" stroke="#3aa52e" strokeWidth="2.200" fill="none" />
      </svg>
    ),
  },
];

function Taskbar() {
  return (
    <footer className="relative flex h-[60px] items-stretch bg-[#dadadb] font-['Open_Sans','Noto_Sans_CJK_SC',sans-serif]">
      <button aria-label="开始" className="flex w-4 items-center">
        <svg viewBox="0 0 15 24" className="h-6 w-[15px]">
          <path d="M0 2l1 0v9H0zM2 1.700L15 0v11H2zM0 13h1v9H0zM2 13h13v11L2 22z" />
        </svg>
      </button>
      <button aria-label="搜索" className="flex w-[100px] items-center pl-[42px]">
        <svg viewBox="0 0 34 34" className="h-[34px] w-[34px]" fill="none" stroke="#000" strokeWidth="3">
          <circle cx="20" cy="14" r="12" />
          <path d="M12 23L1.500 33" strokeWidth="3.500" />
        </svg>
      </button>
      <div className="flex gap-0.5">
        {apps.map((app) => (
          <button
            key={app.name}
            aria-label={app.name}
            className={`flex w-[73px] flex-col items-center pt-3 ${app.mark === "active" ? "bg-[#f1f1f1]" : ""}`}
          >
            {app.icon}
            <span className={`mt-auto flex h-[3px] bg-[#0078d7] ${app.mark === "active" ? "w-full" : "w-[61px]"}`}>
              {app.mark === "double" && <span className="ml-auto w-3 bg-[#65abe4]" />}
            </span>
          </button>
        ))}
      </div>
      <div className="ml-auto flex items-center bg-[linear-gradient(90deg,transparent,#e4dedd_22%,#dfe6e7_38%,#dadadb_75%)]">
        <button aria-label="显示隐藏的图标" className="pl-[220px]">
          <svg viewBox="0 0 18 10" className="h-2.5 w-[18px]">
            <path d="M0.500 9.500L9 1l8.500 8.500" stroke="#000" strokeWidth="1.500" fill="none" />
          </svg>
        </button>
        <svg viewBox="0 0 24 14" className="ml-4 h-3.5 w-6">
          <path d="M0.500 0.500h21v13h-21z" fill="none" stroke="#000" />
          <path d="M2 2h15v10H2zM22 5h1.500v4H22z" />
        </svg>
        <svg viewBox="0 0 19 19" className="ml-[15px] h-[19px] w-[19px]" fill="none" stroke="#222" strokeWidth="1.200">
          <path d="M1 18.500C1 8 8 1 18.500 1M5.500 18.500C5.500 11 11 5.500 18.500 5.500M10 18.500c0-5 3.500-8.500 8.500-8.500" />
          <path d="M13.500 18.500c0-2 2-4 5-4" />
          <circle cx="17.200" cy="17.200" r="1" fill="#000" />
        </svg>
        <svg viewBox="0 0 23 19" className="ml-3.5 h-[19px] w-[23px]" fill="none" stroke="#000" strokeWidth="1.300">
          <path d="M1 6h3l5-5v17l-5-5H1z" />
          <path d="M12 7c1.500 1.500 1.500 3.500 0 5M15 4.500c3 3 3 7 0 10M18 2c4.500 4.500 4.500 10.500 0 15" />
        </svg>
        <div className="ml-3 flex w-[100px] flex-col items-center text-[19px] leading-7">
          <span>21:55</span>
          <span>2024/2/17</span>
        </div>
        <button aria-label="通知" className="ml-[27px]">
          <svg viewBox="0 0 24 24" className="h-6 w-6">
            <path d="M0.500 0.500h23v18h-8L12 22.500 8.500 18.500h-8z" fill="none" stroke="#000" />
          </svg>
        </button>
        <span className="ml-[30px] h-full w-0.5 bg-[#b0b0b0]" />
        <span className="w-1.5" />
      </div>
      <span className="absolute right-4 bottom-1.5 text-[17px] leading-6 whitespace-nowrap text-white/80 [text-shadow:1px_1px_1px_#777,-1px_-1px_1px_#999]">
        CSDN @慢步前行
      </span>
    </footer>
  );
}

export default function App() {
  return (
    <div className="flex min-h-screen flex-col bg-[#3e3e3e] font-['Noto_Sans','Noto_Sans_CJK_SC',sans-serif] text-[12px] leading-4 text-black">
      <Defs />
      <div className="relative flex-1 overflow-hidden">
        <DesktopIcons />
        <Branding />
        <IisManager />
        <SettingsDialog />
        <DuMeter />
      </div>
      <Taskbar />
    </div>
  );
}
